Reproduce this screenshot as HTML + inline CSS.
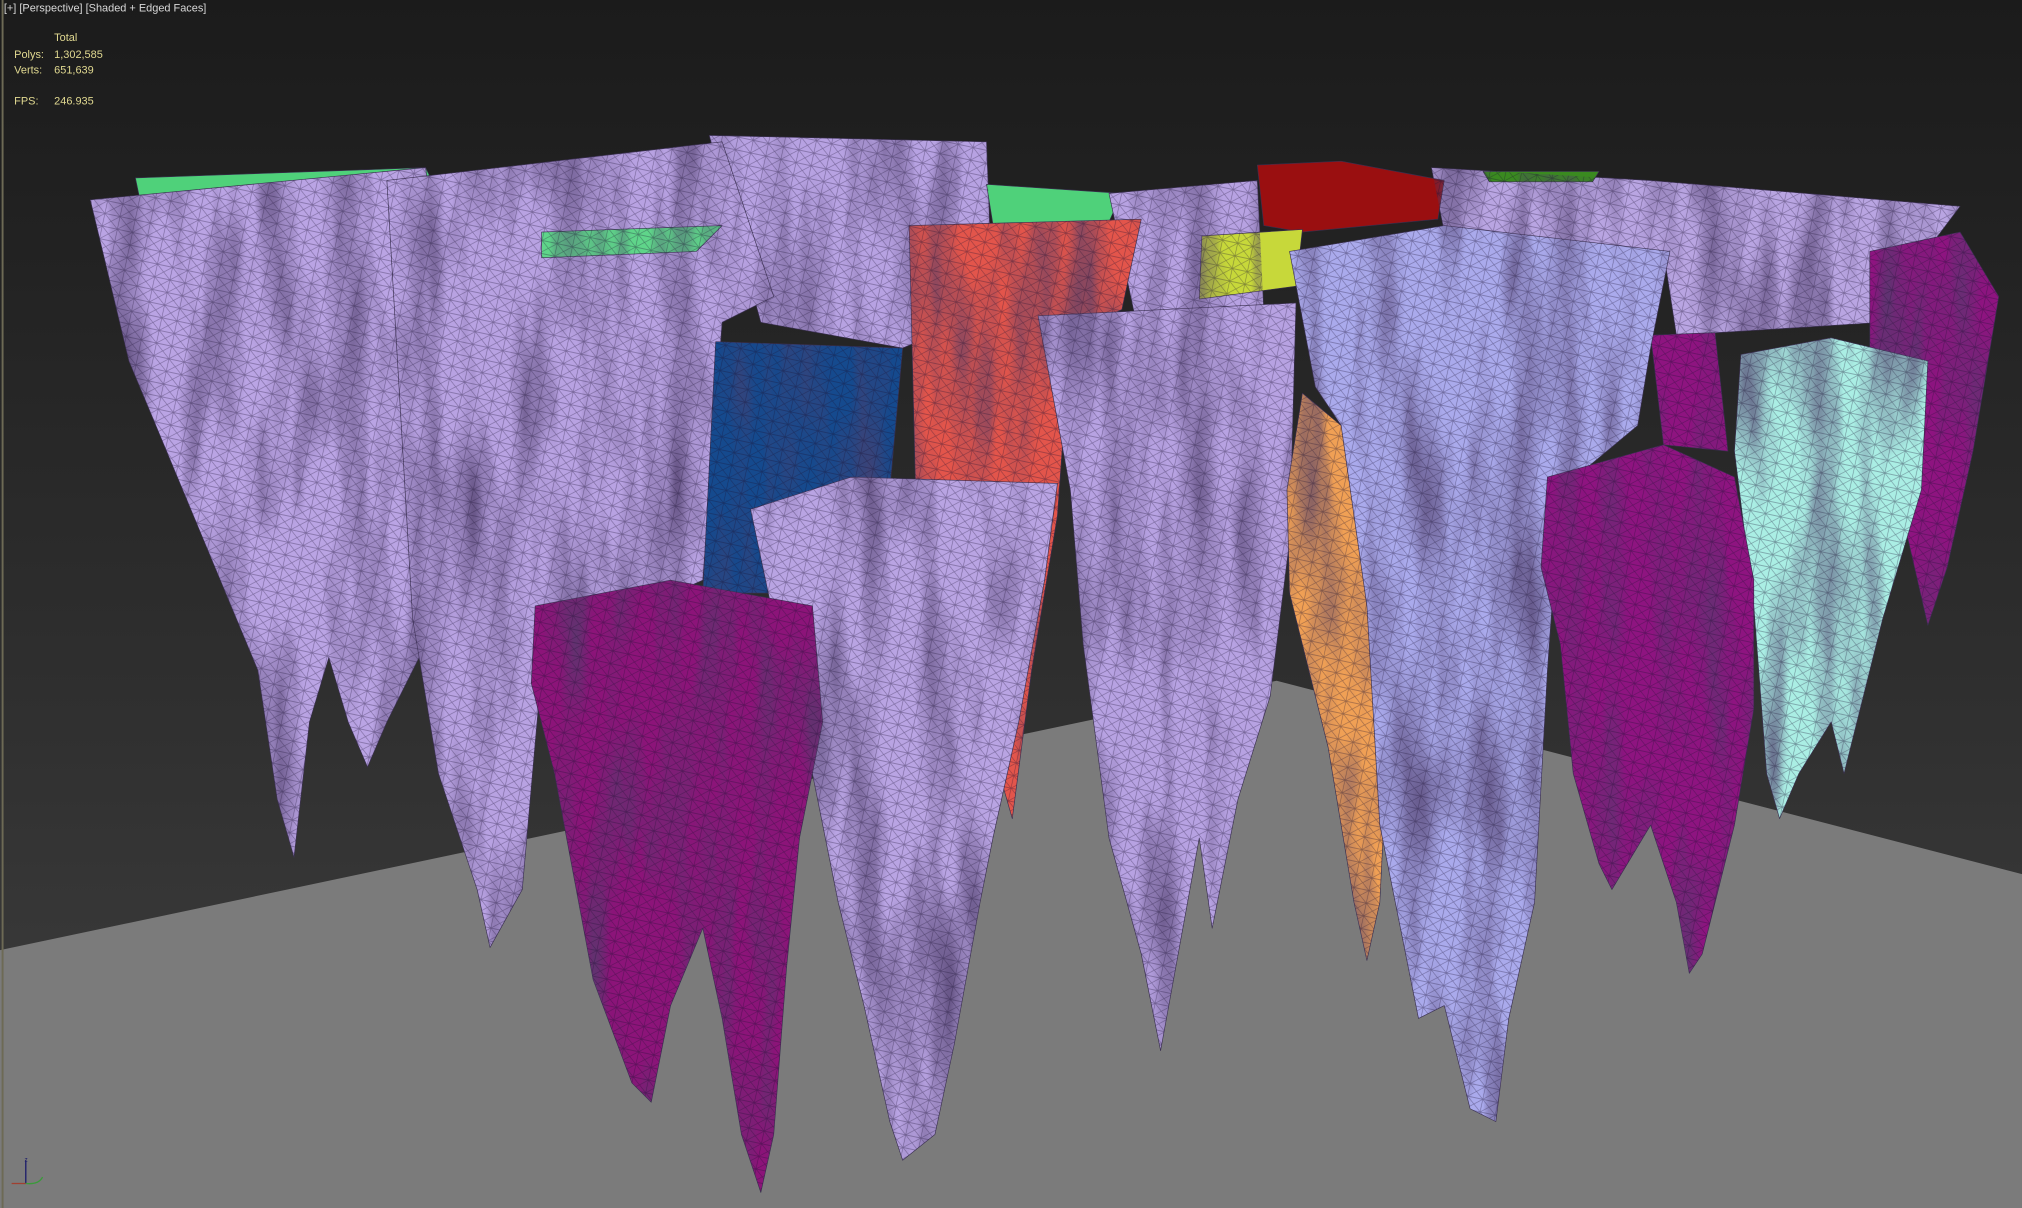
<!DOCTYPE html>
<html><head><meta charset="utf-8"><style>
html,body{margin:0;padding:0;width:2022px;height:1208px;overflow:hidden;background:#222}
svg{display:block}
</style></head><body>
<svg width="2022" height="1208" viewBox="0 0 1568 937" preserveAspectRatio="none" xmlns="http://www.w3.org/2000/svg">
<defs>
<linearGradient id="bg" x1="0" y1="0" x2="0" y2="1">
<stop offset="0" stop-color="#1b1b1b"/><stop offset="0.6" stop-color="#303030"/><stop offset="1" stop-color="#404040"/>
</linearGradient>
<pattern id="wf" width="12" height="10" patternUnits="userSpaceOnUse" patternTransform="rotate(12)">
<path d="M0 0L12 10M12 0L0 10M0 5H12M6 0V10" stroke="#1a1030" stroke-width="0.5" fill="none" opacity="0.4"/>
</pattern>
<filter id="streak" x="0" y="0" width="100%" height="100%">
<feTurbulence type="fractalNoise" baseFrequency="0.035 0.006" numOctaves="3" seed="4"/>
<feColorMatrix type="matrix" values="0 0 0 0 0.08  0 0 0 0 0.05  0 0 0 0 0.15  2.2 0 0 0 -0.9"/>
</filter>
<clipPath id="shapes">
<polygon points="1110,130 1280,140 1520,160 1490,200 1460,250 1300,260 1290,195 1120,180"/>
<polygon points="550,105 765,110 770,240 700,270 590,250"/>
<polygon points="860,150 975,140 980,240 880,245"/>
<polygon points="1280,260 1330,258 1340,350 1290,345"/>
<polygon points="1450,195 1520,180 1550,230 1530,350 1510,440 1495,485 1480,420 1460,350 1450,270"/>
<polygon points="70,155 330,130 340,200 330,500 300,560 285,595 270,560 255,510 240,560 228,665 215,620 200,520 150,400 100,280"/>
<polygon points="300,140 560,110 600,230 560,250 545,450 500,470 420,520 405,690 380,735 370,690 340,600 320,480"/>
<polygon points="705,175 885,170 870,240 830,260 820,400 800,520 785,635 775,600 760,420 710,380"/>
<polygon points="555,265 700,270 690,380 650,385 600,460 545,460"/>
<polygon points="805,245 1005,235 1000,420 985,540 960,620 940,720 930,650 910,760 900,815 885,740 860,650 840,500 830,380"/>
<polygon points="1010,305 1040,330 1060,420 1075,600 1070,700 1060,745 1050,700 1030,580 1000,460 998,380"/>
<polygon points="1000,195 1120,175 1295,195 1280,270 1270,330 1210,380 1200,520 1190,700 1170,790 1160,870 1140,860 1120,780 1100,790 1070,640 1060,470 1040,330 1020,300"/>
<polygon points="1350,275 1420,262 1495,280 1490,380 1460,480 1440,560 1430,600 1420,560 1395,600 1380,635 1370,600 1360,470 1345,350"/>
<polygon points="1200,370 1290,345 1345,370 1360,450 1360,550 1345,640 1320,740 1310,755 1300,700 1280,640 1250,690 1240,670 1220,600 1210,500 1195,440"/>
<polygon points="582,395 660,370 820,375 810,450 790,560 770,650 760,700 740,810 725,880 700,900 690,870 670,780 650,700 630,600 600,480"/>
<polygon points="415,470 520,450 630,470 638,560 620,650 610,750 600,880 590,925 575,880 560,790 545,720 520,780 505,855 490,840 460,760 430,600 412,530"/>
</clipPath>
</defs>
<rect width="1568" height="937" fill="url(#bg)"/>
<polygon points="0,737 990,528 1568,678 1568,937 0,937" fill="#7b7b7b"/>
<line x1="2" y1="0" x2="2" y2="937" stroke="#6d6a55" stroke-width="1.5"/>
<g stroke="#3a3050" stroke-width="0.5" stroke-linejoin="round">
<polygon points="1110,130 1280,140 1520,160 1490,200 1460,250 1300,260 1290,195 1120,180" fill="#b9a5e2"/>
<polygon points="550,105 765,110 770,240 700,270 590,250" fill="#b7a2e2"/>
<polygon points="105,138 330,130 340,150 110,162" fill="#4fd17a"/>
<polygon points="765,143 870,150 860,172 770,174" fill="#4fd17a"/>
<polygon points="975,128 1040,125 1120,140 1115,170 1010,180 980,175" fill="#9a0f10"/>
<polygon points="1150,133 1240,133 1235,141 1155,141" fill="#3a8a20"/>
<polygon points="860,150 975,140 980,240 880,245" fill="#b7a2e2"/>
<polygon points="932,183 1010,178 1005,222 930,232" fill="#c7d83a"/>
<polygon points="1280,260 1330,258 1340,350 1290,345" fill="#8e1480"/>
<polygon points="1450,195 1520,180 1550,230 1530,350 1510,440 1495,485 1480,420 1460,350 1450,270" fill="#8e1480"/>
<polygon points="70,155 330,130 340,200 330,500 300,560 285,595 270,560 255,510 240,560 228,665 215,620 200,520 150,400 100,280" fill="#baa4e4"/>
<polygon points="300,140 560,110 600,230 560,250 545,450 500,470 420,520 405,690 380,735 370,690 340,600 320,480" fill="#b8a2e2"/>
<polygon points="420,180 560,175 540,195 420,200" fill="#5fd58a"/>
<polygon points="705,175 885,170 870,240 830,260 820,400 800,520 785,635 775,600 760,420 710,380" fill="#e3554b"/>
<polygon points="555,265 700,270 690,380 650,385 600,460 545,460" fill="#154a8e"/>
<polygon points="805,245 1005,235 1000,420 985,540 960,620 940,720 930,650 910,760 900,815 885,740 860,650 840,500 830,380" fill="#b7a2e2"/>
<polygon points="1010,305 1040,330 1060,420 1075,600 1070,700 1060,745 1050,700 1030,580 1000,460 998,380" fill="#f0a055"/>
<polygon points="1000,195 1120,175 1295,195 1280,270 1270,330 1210,380 1200,520 1190,700 1170,790 1160,870 1140,860 1120,780 1100,790 1070,640 1060,470 1040,330 1020,300" fill="#aaaaec"/>
<polygon points="1350,275 1420,262 1495,280 1490,380 1460,480 1440,560 1430,600 1420,560 1395,600 1380,635 1370,600 1360,470 1345,350" fill="#aaeee4"/>
<polygon points="1200,370 1290,345 1345,370 1360,450 1360,550 1345,640 1320,740 1310,755 1300,700 1280,640 1250,690 1240,670 1220,600 1210,500 1195,440" fill="#8e1480"/>
<polygon points="582,395 660,370 820,375 810,450 790,560 770,650 760,700 740,810 725,880 700,900 690,870 670,780 650,700 630,600 600,480" fill="#b9a4e3"/>
<polygon points="415,470 520,450 630,470 638,560 620,650 610,750 600,880 590,925 575,880 560,790 545,720 520,780 505,855 490,840 460,760 430,600 412,530" fill="#8c1479"/>
</g>
<g clip-path="url(#shapes)">
<rect width="1568" height="937" filter="url(#streak)" opacity="0.75"/>
<rect width="1568" height="937" fill="url(#wf)"/>
</g>
<g font-family="Liberation Sans, sans-serif" font-size="8.5">
<text x="3" y="9" fill="#d8d8d8">[+] [Perspective] [Shaded + Edged Faces]</text>
<text x="42" y="32" fill="#e0d890">Total</text>
<text x="11" y="45" fill="#e0d890">Polys:</text><text x="42" y="45" fill="#e0d890">1,302,585</text>
<text x="11" y="57" fill="#e0d890">Verts:</text><text x="42" y="57" fill="#e0d890">651,639</text>
<text x="11" y="81" fill="#e0d890">FPS:</text><text x="42" y="81" fill="#e0d890">246.935</text>
</g>
<g stroke-width="1">
<line x1="20" y1="918" x2="20" y2="900" stroke="#1a1a6a"/>
<line x1="20" y1="918" x2="9" y2="918" stroke="#a04030"/>
<path d="M20 918 Q30 919 33 913" stroke="#3a9a3a" fill="none"/>
<text x="19" y="901" font-size="5" fill="#1a1a6a" font-family="Liberation Sans, sans-serif">z</text>
</g>
</svg>
</body></html>
